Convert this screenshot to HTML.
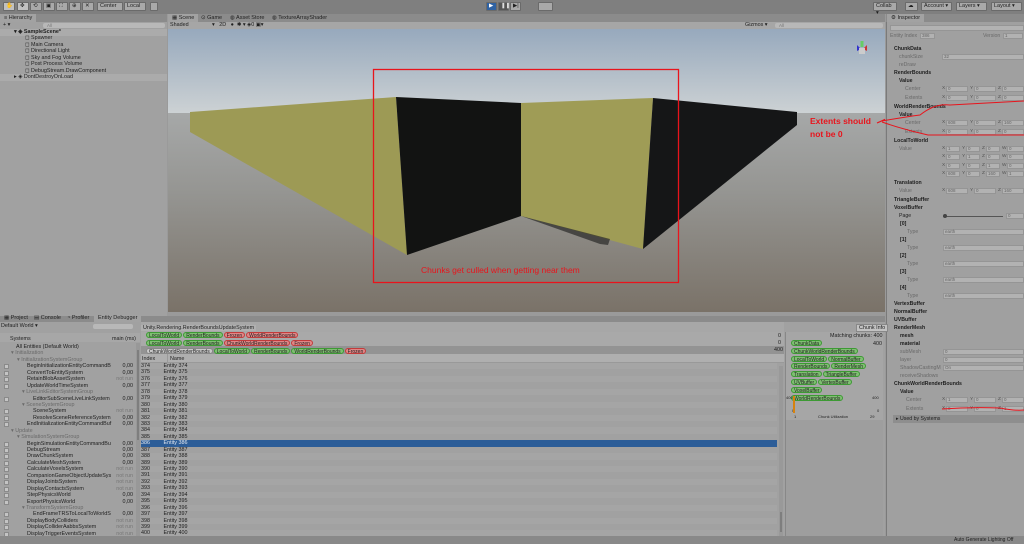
<!DOCTYPE html>
<html><head><meta charset="utf-8"><style>
*{margin:0;padding:0;box-sizing:border-box}
body{width:1024px;height:544px;overflow:hidden;background:#9a9a9a;font-family:"Liberation Sans",sans-serif;font-size:5.4px;color:#1e1e1e;position:relative}
.a{position:absolute}
.tb{background:#7f7f7f}
.btn{position:absolute;background:#a9a9a9;border:1px solid #6a6a6a;border-radius:1px;height:9px;top:2px;font-size:5.5px;line-height:7px;padding:0 2px}
.tab{position:absolute;height:8px;line-height:8px;font-size:5.5px;padding:0 4px}
.strip{background:#8b8b8b}
.row{height:6.45px;line-height:6.45px;white-space:nowrap;position:relative}
.g{color:#6a6a6a}
.nr{color:#777}
.ck{position:absolute;left:4px;top:1px;width:5px;height:5px;background:#c4c4c4;border:1px solid #8a8a8a}
.v{position:absolute;right:3px}
.tag{display:inline-block;border-radius:3px;padding:0 2px;height:6px;line-height:6px;margin-right:1px;font-size:5px;color:#222}
.gr{background:#7fbf72;border:1px solid #3d9a34}
.rd{background:#e08686;border:1px solid #c23b3b}
.wh{background:#c9c9c9;border:1px solid #888}
.ins div.l{position:absolute;white-space:nowrap;font-size:5.2px}
.b{font-weight:bold}
.f{position:absolute;height:6px;background:#b2b2b2;border:1px solid #959595;font-size:4.5px;line-height:4.5px;color:#666;padding-left:1px}
.x{position:absolute;font-size:4.8px;color:#555;line-height:6px}
</style></head><body>

<div class="a tb" style="left:0;top:0;width:1024px;height:14px"></div>
<div class="btn" style="left:3px;width:12px;background:#c0c0c0">✋</div>
<div class="btn" style="left:17px;width:12px;background:#c0c0c0">✥</div>
<div class="btn" style="left:30px;width:12px">⟲</div>
<div class="btn" style="left:43px;width:12px">▣</div>
<div class="btn" style="left:56px;width:12px">⛶</div>
<div class="btn" style="left:69px;width:12px">⊕</div>
<div class="btn" style="left:82px;width:12px">✕</div>
<div class="btn" style="left:97px;width:26px">Center</div>
<div class="btn" style="left:124px;width:22px">Local</div>
<div class="btn" style="left:150px;width:8px"></div>
<div class="btn" style="left:486px;width:11px;background:#2f62a3;color:#fff">▶</div>
<div class="btn" style="left:498px;width:11px;background:#555;color:#ddd">❚❚</div>
<div class="btn" style="left:510px;width:11px">▶|</div>
<div class="btn" style="left:538px;width:15px"></div>
<div class="btn" style="left:873px;width:24px">Collab ▾</div>
<div class="btn" style="left:905px;width:13px">☁</div>
<div class="btn" style="left:921px;width:31px">Account ▾</div>
<div class="btn" style="left:956px;width:31px">Layers ▾</div>
<div class="btn" style="left:991px;width:31px">Layout ▾</div>

<!-- Hierarchy -->
<div class="a strip" style="left:0;top:14px;width:167px;height:8px"></div>
<div class="tab" style="left:0;top:14px;background:#a2a2a2">≡ Hierarchy</div>
<div class="a" style="left:0;top:22px;width:167px;height:294px;background:#a1a1a1"></div>
<div class="a" style="left:3px;top:22px">+ ▾</div>
<div class="a" style="left:43px;top:23px;width:122px;height:5px;background:#b8b8b8;border-radius:2px;font-size:4.5px;color:#777;padding-left:4px;line-height:5px">All</div>
<div class="a" style="left:0;top:29px;width:167px;height:6.5px;background:#ababab"></div>
<div class="a b" style="left:14px;top:29px;line-height:6.5px">▾ ◈ SampleScene*</div>
<div class="a" style="left:25px;top:35px;line-height:6.5px">◻ Spawner<br>◻ Main Camera<br>◻ Directional Light<br>◻ Sky and Fog Volume<br>◻ Post Process Volume<br>◻ DebugStream.DrawComponent</div>
<div class="a" style="left:0;top:74px;width:167px;height:6.5px;background:#ababab"></div>
<div class="a" style="left:14px;top:74px;line-height:6.5px">▸ ◈ DontDestroyOnLoad</div>

<!-- Scene -->
<div class="a strip" style="left:168px;top:14px;width:717px;height:8px"></div>
<div class="tab" style="left:168px;top:14px;background:#a2a2a2">▦ Scene</div>
<div class="tab" style="left:197px;top:14px">⊙ Game</div>
<div class="tab" style="left:226px;top:14px">◍ Asset Store</div>
<div class="tab" style="left:268px;top:14px">◍ TextureArrayShader</div>
<div class="a" style="left:168px;top:22px;width:717px;height:7px;background:#a6a6a6"></div>
<div class="a" style="left:170px;top:22px;line-height:7px">Shaded</div>
<div class="a" style="left:212px;top:22px;line-height:7px">▾ &nbsp; 2D &nbsp; ● &nbsp;✱ ▾ ◈0 ▣▾</div>
<div class="a" style="left:745px;top:22px;line-height:7px">Gizmos ▾</div>
<div class="a" style="left:775px;top:23px;width:108px;height:5px;background:#b8b8b8;border-radius:2px;font-size:4.5px;color:#777;padding-left:4px;line-height:5px">All</div>
<svg class="a" style="left:168px;top:29px" width="717" height="283" viewBox="168 29 717 283">
<defs>
<linearGradient id="sky" x1="0" y1="0" x2="0" y2="1"><stop offset="0" stop-color="#97a9bd"/><stop offset="1" stop-color="#cdd2d4"/></linearGradient>
<linearGradient id="gnd" x1="0" y1="0" x2="0" y2="1"><stop offset="0" stop-color="#a6a8a8"/><stop offset="0.4" stop-color="#959592"/><stop offset="1" stop-color="#7a7268"/></linearGradient>
</defs>
<rect x="168" y="29" width="717" height="85" fill="url(#sky)"/>
<rect x="168" y="113" width="717" height="199" fill="url(#gnd)"/>
<polygon points="190,112 396,97 407,255 190,132" fill="#9d9a55"/>
<polygon points="396,97 521,103 521,216 407,255" fill="#121312"/>
<polygon points="521,103 653,98 643,249 521,216" fill="#9f9c56"/>
<polygon points="521,216 610,239 608,245 600,244" fill="#2a2a28" opacity=".7"/>
<polygon points="653,98 797,112 797,125 643,249" fill="#151617"/>
<rect x="373.5" y="69.5" width="305" height="213" fill="none" stroke="#e8141c" stroke-width="1.3"/>
<text x="421" y="273" fill="#e8141c" font-size="8.5" font-family="Liberation Sans">Chunks get culled when getting near them</text>
<text x="810" y="124" fill="#e8141c" font-size="8.5" font-weight="bold" font-family="Liberation Sans">Extents should</text>
<text x="810" y="137" fill="#e8141c" font-size="8.5" font-weight="bold" font-family="Liberation Sans">not be 0</text>
<path d="M877 123 L886 119" stroke="#e8141c" stroke-width="1.2"/>
<g transform="translate(862,47)"><rect x="-1.5" y="-6" width="3" height="6" fill="#6c6"/><polygon points="-5,-2 -1,2 -5,4" fill="#33c"/><polygon points="5,-2 1,2 5,4" fill="#c33"/><rect x="-3" y="1" width="6" height="6" fill="#ccc"/></g>
</svg>

<!-- Inspector -->
<div class="a strip" style="left:886px;top:14px;width:138px;height:8px"></div>
<div class="tab" style="left:887px;top:14px;background:#a2a2a2">⚙ Inspector</div>
<div class="a ins" style="left:886px;top:22px;width:138px;height:514px;background:#a0a0a0;border-left:1px solid #7a7a7a">
<div class="f" style="left:3px;top:3px;width:134px"></div>
<div class="l g" style="left:3px;top:11px">Entity Index</div><div class="f" style="left:33px;top:11px;width:15px">386</div>
<div class="l g" style="left:96px;top:11px">Version</div><div class="f" style="left:116px;top:11px;width:20px">1</div>
<div class="l b" style="left:7px;top:24px">ChunkData</div>
<div class="l g" style="left:12px;top:32px">chunkSize</div><div class="f" style="left:55px;top:32px;width:82px">32</div>
<div class="l g" style="left:12px;top:40px">reDraw</div>
<div class="l b" style="left:7px;top:48px">RenderBounds</div>
<div class="l b" style="left:12px;top:56px">Value</div>
<div class="l g" style="left:18px;top:64px">Center</div>
<div class="l g" style="left:18px;top:73px">Extents</div>
<div class="l b" style="left:7px;top:82px">WorldRenderBounds</div>
<div class="l b" style="left:12px;top:90px">Value</div>
<div class="l g" style="left:18px;top:98px">Center</div>
<div class="l g" style="left:18px;top:107px">Extents</div>
<div class="l b" style="left:7px;top:116px">LocalToWorld</div>
<div class="l g" style="left:12px;top:124px">Value</div>
<div class="l b" style="left:7px;top:158px">Translation</div>
<div class="l g" style="left:12px;top:166px">Value</div>
<div class="l b" style="left:7px;top:175px">TriangleBuffer</div>
<div class="l b" style="left:7px;top:183px">VoxelBuffer</div>
<div class="l" style="left:12px;top:191px">Page</div>
<div class="a" style="left:56px;top:194px;width:60px;height:1px;background:#555"></div>
<div class="a" style="left:56px;top:192px;width:4px;height:4px;border-radius:2px;background:#444"></div>
<div class="f" style="left:119px;top:191px;width:18px">0</div>
<div class="l b" style="left:13px;top:199px">[0]</div><div class="l g" style="left:20px;top:207px">Type</div><div class="f" style="left:56px;top:207px;width:81px">earth</div>
<div class="l b" style="left:13px;top:215px">[1]</div><div class="l g" style="left:20px;top:223px">Type</div><div class="f" style="left:56px;top:223px;width:81px">earth</div>
<div class="l b" style="left:13px;top:231px">[2]</div><div class="l g" style="left:20px;top:239px">Type</div><div class="f" style="left:56px;top:239px;width:81px">earth</div>
<div class="l b" style="left:13px;top:247px">[3]</div><div class="l g" style="left:20px;top:255px">Type</div><div class="f" style="left:56px;top:255px;width:81px">earth</div>
<div class="l b" style="left:13px;top:263px">[4]</div><div class="l g" style="left:20px;top:271px">Type</div><div class="f" style="left:56px;top:271px;width:81px">earth</div>
<div class="l b" style="left:7px;top:279px">VertexBuffer</div>
<div class="l b" style="left:7px;top:287px">NormalBuffer</div>
<div class="l b" style="left:7px;top:295px">UVBuffer</div>
<div class="l b" style="left:7px;top:303px">RenderMesh</div>
<div class="l b" style="left:13px;top:311px">mesh</div>
<div class="l b" style="left:13px;top:319px">material</div>
<div class="l g" style="left:13px;top:327px">subMesh</div><div class="f" style="left:56px;top:327px;width:81px">0</div>
<div class="l g" style="left:13px;top:335px">layer</div><div class="f" style="left:56px;top:335px;width:81px">0</div>
<div class="l g" style="left:13px;top:343px">ShadowCastingM</div><div class="f" style="left:56px;top:343px;width:81px">On</div>
<div class="l g" style="left:13px;top:351px">receiveShadows</div>
<div class="l b" style="left:7px;top:359px">ChunkWorldRenderBounds</div>
<div class="l b" style="left:13px;top:367px">Value</div>
<div class="l g" style="left:19px;top:375px">Center</div>
<div class="l g" style="left:19px;top:384px">Extents</div>
<div class="a" style="left:6px;top:393px;width:132px;height:8px;background:#8e8e8e"></div>
<div class="l" style="left:9px;top:394px">▸ Used by Systems</div>

<!-- XYZ rows (coords relative to inspector: left 886, top 22) -->
<div class="x" style="left:55px;top:64px">X</div><div class="f" style="left:59px;top:64px;width:22px">0</div><div class="x" style="left:83px;top:64px">Y</div><div class="f" style="left:87px;top:64px;width:22px">0</div><div class="x" style="left:111px;top:64px">Z</div><div class="f" style="left:115px;top:64px;width:22px">0</div>
<div class="x" style="left:55px;top:73px">X</div><div class="f" style="left:59px;top:73px;width:22px">0</div><div class="x" style="left:83px;top:73px">Y</div><div class="f" style="left:87px;top:73px;width:22px">0</div><div class="x" style="left:111px;top:73px">Z</div><div class="f" style="left:115px;top:73px;width:22px">0</div>
<div class="x" style="left:55px;top:98px">X</div><div class="f" style="left:59px;top:98px;width:22px">608</div><div class="x" style="left:83px;top:98px">Y</div><div class="f" style="left:87px;top:98px;width:22px">0</div><div class="x" style="left:111px;top:98px">Z</div><div class="f" style="left:115px;top:98px;width:22px">160</div>
<div class="x" style="left:55px;top:107px">X</div><div class="f" style="left:59px;top:107px;width:22px">0</div><div class="x" style="left:83px;top:107px">Y</div><div class="f" style="left:87px;top:107px;width:22px">0</div><div class="x" style="left:111px;top:107px">Z</div><div class="f" style="left:115px;top:107px;width:22px">0</div>

<div class="x" style="left:55px;top:124px">X</div><div class="f" style="left:59px;top:124px;width:14px">1</div><div class="x" style="left:75px;top:124px">Y</div><div class="f" style="left:79px;top:124px;width:14px">0</div><div class="x" style="left:95px;top:124px">Z</div><div class="f" style="left:99px;top:124px;width:14px">0</div><div class="x" style="left:115px;top:124px">W</div><div class="f" style="left:120px;top:124px;width:17px">0</div>
<div class="x" style="left:55px;top:132px">X</div><div class="f" style="left:59px;top:132px;width:14px">0</div><div class="x" style="left:75px;top:132px">Y</div><div class="f" style="left:79px;top:132px;width:14px">1</div><div class="x" style="left:95px;top:132px">Z</div><div class="f" style="left:99px;top:132px;width:14px">0</div><div class="x" style="left:115px;top:132px">W</div><div class="f" style="left:120px;top:132px;width:17px">0</div>
<div class="x" style="left:55px;top:141px">X</div><div class="f" style="left:59px;top:141px;width:14px">0</div><div class="x" style="left:75px;top:141px">Y</div><div class="f" style="left:79px;top:141px;width:14px">0</div><div class="x" style="left:95px;top:141px">Z</div><div class="f" style="left:99px;top:141px;width:14px">1</div><div class="x" style="left:115px;top:141px">W</div><div class="f" style="left:120px;top:141px;width:17px">0</div>
<div class="x" style="left:55px;top:149px">X</div><div class="f" style="left:59px;top:149px;width:14px">608</div><div class="x" style="left:75px;top:149px">Y</div><div class="f" style="left:79px;top:149px;width:14px">0</div><div class="x" style="left:95px;top:149px">Z</div><div class="f" style="left:99px;top:149px;width:14px">160</div><div class="x" style="left:115px;top:149px">W</div><div class="f" style="left:120px;top:149px;width:17px">1</div>

<div class="x" style="left:55px;top:166px">X</div><div class="f" style="left:59px;top:166px;width:22px">608</div><div class="x" style="left:83px;top:166px">Y</div><div class="f" style="left:87px;top:166px;width:22px">0</div><div class="x" style="left:111px;top:166px">Z</div><div class="f" style="left:115px;top:166px;width:22px">160</div>

<div class="x" style="left:55px;top:375px">X</div><div class="f" style="left:59px;top:375px;width:22px">1</div><div class="x" style="left:83px;top:375px">Y</div><div class="f" style="left:87px;top:375px;width:22px">0</div><div class="x" style="left:111px;top:375px">Z</div><div class="f" style="left:115px;top:375px;width:22px">0</div>
<div class="x" style="left:55px;top:384px">X</div><div class="f" style="left:59px;top:384px;width:22px">0</div><div class="x" style="left:83px;top:384px">Y</div><div class="f" style="left:87px;top:384px;width:22px">0</div><div class="x" style="left:111px;top:384px">Z</div><div class="f" style="left:115px;top:384px;width:22px">1</div>
</div>
<svg class="a" style="left:880px;top:95px" width="144" height="45"><path d="M2 26 Q25 22 40 20 Q55 8 70 10 L144 6 M2 27 Q25 35 48 40 L144 40" stroke="#e8141c" fill="none" stroke-width="1"/></svg>
<svg class="a" style="left:940px;top:405px" width="84" height="8"><path d="M2 4 Q30 2 60 3 Q75 6 84 5" stroke="#e8141c" fill="none" stroke-width="1"/></svg>

<!-- bottom panel -->
<div class="a strip" style="left:0;top:316px;width:885px;height:6px"></div>
<div class="tab" style="left:0;top:315px;height:7px;line-height:7px">▦ Project</div>
<div class="tab" style="left:30px;top:315px;height:7px;line-height:7px">▤ Console</div>
<div class="tab" style="left:63px;top:315px;height:7px;line-height:7px">◔ Profiler</div>
<div class="tab" style="left:94px;top:315px;height:7px;line-height:7px;background:#a2a2a2">Entity Debugger</div>
<div class="a" style="left:0;top:322px;width:885px;height:214px;background:#a1a1a1"></div>
<div class="a" style="left:1px;top:323px">Default World ▾</div>
<div class="a" style="left:93px;top:324px;width:40px;height:5px;background:#b8b8b8;border-radius:2px"></div>
<div class="a" style="left:0;top:333px;width:140px;height:9px;background:#a7a7a7"></div>
<div class="a" style="left:10px;top:336px">Systems</div><div class="a" style="left:112px;top:336px">main (ms)</div>
<div class="a" style="left:136px;top:343px;width:4px;height:193px;background:#989898"></div>
<div class="a" style="left:137px;top:350px;width:2px;height:90px;background:#7e7e7e"></div>
<div class="a" style="left:0;top:344px;width:136px">
<div class="row" style="padding-left:16px">All Entities (Default World)</div>
<div class="row g" style="padding-left:11px">▾ Initialization</div>
<div class="row g" style="padding-left:17px">▾ InitializationSystemGroup</div>
<div class="row" style="padding-left:27px"><span class="ck"></span>BeginInitializationEntityCommandB<span class="v">0,00</span></div>
<div class="row" style="padding-left:27px"><span class="ck"></span>ConvertToEntitySystem<span class="v">0,00</span></div>
<div class="row" style="padding-left:27px"><span class="ck"></span>RetainBlobAssetSystem<span class="v nr">not run</span></div>
<div class="row" style="padding-left:27px"><span class="ck"></span>UpdateWorldTimeSystem<span class="v">0,00</span></div>
<div class="row g" style="padding-left:22px">▾ LiveLinkEditorSystemGroup</div>
<div class="row" style="padding-left:33px"><span class="ck"></span>EditorSubSceneLiveLinkSystem<span class="v">0,00</span></div>
<div class="row g" style="padding-left:22px">▾ SceneSystemGroup</div>
<div class="row" style="padding-left:33px"><span class="ck"></span>SceneSystem<span class="v nr">not run</span></div>
<div class="row" style="padding-left:33px"><span class="ck"></span>ResolveSceneReferenceSystem<span class="v">0,00</span></div>
<div class="row" style="padding-left:27px"><span class="ck"></span>EndInitializationEntityCommandBuf<span class="v">0,00</span></div>
<div class="row g" style="padding-left:11px">▾ Update</div>
<div class="row g" style="padding-left:17px">▾ SimulationSystemGroup</div>
<div class="row" style="padding-left:27px"><span class="ck"></span>BeginSimulationEntityCommandBu<span class="v">0,00</span></div>
<div class="row" style="padding-left:27px"><span class="ck"></span>DebugStream<span class="v">0,00</span></div>
<div class="row" style="padding-left:27px"><span class="ck"></span>DrawChunkSystem<span class="v">0,00</span></div>
<div class="row" style="padding-left:27px"><span class="ck"></span>CalculateMeshSystem<span class="v">0,00</span></div>
<div class="row" style="padding-left:27px"><span class="ck"></span>CalculateVoxelsSystem<span class="v nr">not run</span></div>
<div class="row" style="padding-left:27px"><span class="ck"></span>CompanionGameObjectUpdateSys<span class="v nr">not run</span></div>
<div class="row" style="padding-left:27px"><span class="ck"></span>DisplayJointsSystem<span class="v nr">not run</span></div>
<div class="row" style="padding-left:27px"><span class="ck"></span>DisplayContactsSystem<span class="v nr">not run</span></div>
<div class="row" style="padding-left:27px"><span class="ck"></span>StepPhysicsWorld<span class="v">0,00</span></div>
<div class="row" style="padding-left:27px"><span class="ck"></span>ExportPhysicsWorld<span class="v">0,00</span></div>
<div class="row g" style="padding-left:22px">▾ TransformSystemGroup</div>
<div class="row" style="padding-left:33px"><span class="ck"></span>EndFrameTRSToLocalToWorldS<span class="v">0,00</span></div>
<div class="row" style="padding-left:27px"><span class="ck"></span>DisplayBodyColliders<span class="v nr">not run</span></div>
<div class="row" style="padding-left:27px"><span class="ck"></span>DisplayColliderAabbsSystem<span class="v nr">not run</span></div>
<div class="row" style="padding-left:27px"><span class="ck"></span>DisplayTriggerEventsSystem<span class="v nr">not run</span></div>
</div>

<!-- entity middle -->
<div class="a" style="left:141px;top:322px;width:643px;height:10px;background:#a7a7a7"></div>
<div class="a" style="left:141px;top:325px;padding:0 2px;background:#b0b0b0">Unity.Rendering.RenderBoundsUpdateSystem</div>
<div class="a" style="left:856px;top:324px;padding:0 2px;background:#c2c2c2;border:1px solid #888">Chunk Info</div>
<div class="a" style="left:141px;top:332px;width:643px;height:14px;background:#a9a9a9"></div>
<div class="a" style="left:141px;top:346px;width:643px;height:8px;background:#939393"></div>
<div class="a" style="left:146px;top:332px;line-height:7px">
<span class="tag gr">LocalToWorld</span><span class="tag gr">RenderBounds</span><span class="tag rd">Frozen</span><span class="tag rd">WorldRenderBounds</span><br>
<span class="tag gr">LocalToWorld</span><span class="tag gr">RenderBounds</span><span class="tag rd">ChunkWorldRenderBounds</span><span class="tag rd">Frozen</span><br>
<span class="tag wh">ChunkWorldRenderBounds</span><span class="tag gr">LocalToWorld</span><span class="tag gr">RenderBounds</span><span class="tag gr">WorldRenderBounds</span><span class="tag rd">Frozen</span></div>
<div class="a" style="left:778px;top:333px">0</div><div class="a" style="left:778px;top:340px">0</div><div class="a" style="left:774px;top:347px">400</div>
<div class="a" style="left:141px;top:354px;width:643px;height:9px;background:#afafaf;border-bottom:1px solid #999"></div>
<div class="a" style="left:142px;top:356px">Index</div><div class="a" style="left:170px;top:356px">Name</div>
<div class="a" style="left:167px;top:354px;width:1px;height:9px;background:#999"></div>
<div class="a" style="left:141px;top:363px;width:636px">
<div class="row" style="background:#a5a5a5">374 &nbsp; &nbsp; &nbsp; &nbsp; Entity 374</div>
<div class="row">375 &nbsp; &nbsp; &nbsp; &nbsp; Entity 375</div>
<div class="row" style="background:#a5a5a5">376 &nbsp; &nbsp; &nbsp; &nbsp; Entity 376</div>
<div class="row">377 &nbsp; &nbsp; &nbsp; &nbsp; Entity 377</div>
<div class="row" style="background:#a5a5a5">378 &nbsp; &nbsp; &nbsp; &nbsp; Entity 378</div>
<div class="row">379 &nbsp; &nbsp; &nbsp; &nbsp; Entity 379</div>
<div class="row" style="background:#a5a5a5">380 &nbsp; &nbsp; &nbsp; &nbsp; Entity 380</div>
<div class="row">381 &nbsp; &nbsp; &nbsp; &nbsp; Entity 381</div>
<div class="row" style="background:#a5a5a5">382 &nbsp; &nbsp; &nbsp; &nbsp; Entity 382</div>
<div class="row">383 &nbsp; &nbsp; &nbsp; &nbsp; Entity 383</div>
<div class="row" style="background:#a5a5a5">384 &nbsp; &nbsp; &nbsp; &nbsp; Entity 384</div>
<div class="row">385 &nbsp; &nbsp; &nbsp; &nbsp; Entity 385</div>
<div class="row" style="background:#2c5d98;color:#dfe6ef">386 &nbsp; &nbsp; &nbsp; &nbsp; Entity 386</div>
<div class="row">387 &nbsp; &nbsp; &nbsp; &nbsp; Entity 387</div>
<div class="row" style="background:#a5a5a5">388 &nbsp; &nbsp; &nbsp; &nbsp; Entity 388</div>
<div class="row">389 &nbsp; &nbsp; &nbsp; &nbsp; Entity 389</div>
<div class="row" style="background:#a5a5a5">390 &nbsp; &nbsp; &nbsp; &nbsp; Entity 390</div>
<div class="row">391 &nbsp; &nbsp; &nbsp; &nbsp; Entity 391</div>
<div class="row" style="background:#a5a5a5">392 &nbsp; &nbsp; &nbsp; &nbsp; Entity 392</div>
<div class="row">393 &nbsp; &nbsp; &nbsp; &nbsp; Entity 393</div>
<div class="row" style="background:#a5a5a5">394 &nbsp; &nbsp; &nbsp; &nbsp; Entity 394</div>
<div class="row">395 &nbsp; &nbsp; &nbsp; &nbsp; Entity 395</div>
<div class="row" style="background:#a5a5a5">396 &nbsp; &nbsp; &nbsp; &nbsp; Entity 396</div>
<div class="row">397 &nbsp; &nbsp; &nbsp; &nbsp; Entity 397</div>
<div class="row" style="background:#a5a5a5">398 &nbsp; &nbsp; &nbsp; &nbsp; Entity 398</div>
<div class="row">399 &nbsp; &nbsp; &nbsp; &nbsp; Entity 399</div>
<div class="row" style="background:#a5a5a5">400 &nbsp; &nbsp; &nbsp; &nbsp; Entity 400</div>
</div>
<div class="a" style="left:779px;top:366px;width:4px;height:170px;background:#999"></div>
<div class="a" style="left:780px;top:512px;width:2px;height:20px;background:#7e7e7e"></div>

<!-- chunk info -->
<div class="a" style="left:785px;top:332px;width:98px;height:88px;background:#a6a6a6;border-left:1px solid #888"></div>
<div class="a" style="left:785px;top:420px;width:98px;height:116px;background:#9e9e9e;border-left:1px solid #888"></div>
<div class="a" style="left:830px;top:333px">Matching chunks: 400</div>
<div class="a" style="left:791px;top:340px;line-height:6.8px">
<span class="tag gr">ChunkData</span><br><span class="tag gr">ChunkWorldRenderBounds</span><br><span class="tag gr">LocalToWorld</span><span class="tag gr">NormalBuffer</span><br><span class="tag gr">RenderBounds</span><span class="tag gr">RenderMesh</span><br><span class="tag gr">Translation</span><span class="tag gr">TriangleBuffer</span><br><span class="tag gr">UVBuffer</span><span class="tag gr">VertexBuffer</span><br><span class="tag gr">VoxelBuffer</span><br><span class="tag gr">WorldRenderBounds</span></div>
<div class="a" style="left:873px;top:341px">400</div>
<div class="a" style="left:786px;top:395px;font-size:4px">400</div><div class="a" style="left:872px;top:395px;font-size:4px">400</div>
<div class="a" style="left:792px;top:408px;font-size:4px">0</div><div class="a" style="left:877px;top:408px;font-size:4px">0</div>
<div class="a" style="left:793px;top:396px;width:2px;height:17px;background:#d6820e"></div>
<div class="a" style="left:794px;top:414px;font-size:4px">1</div>
<div class="a" style="left:818px;top:414px;font-size:4px">Chunk Utilization</div>
<div class="a" style="left:870px;top:414px;font-size:4px">29</div>

<div class="a" style="left:0;top:536px;width:1024px;height:8px;background:#898989"></div>
<div class="a" style="left:954px;top:537px;font-size:5px">Auto Generate Lighting Off</div>
</body></html>
